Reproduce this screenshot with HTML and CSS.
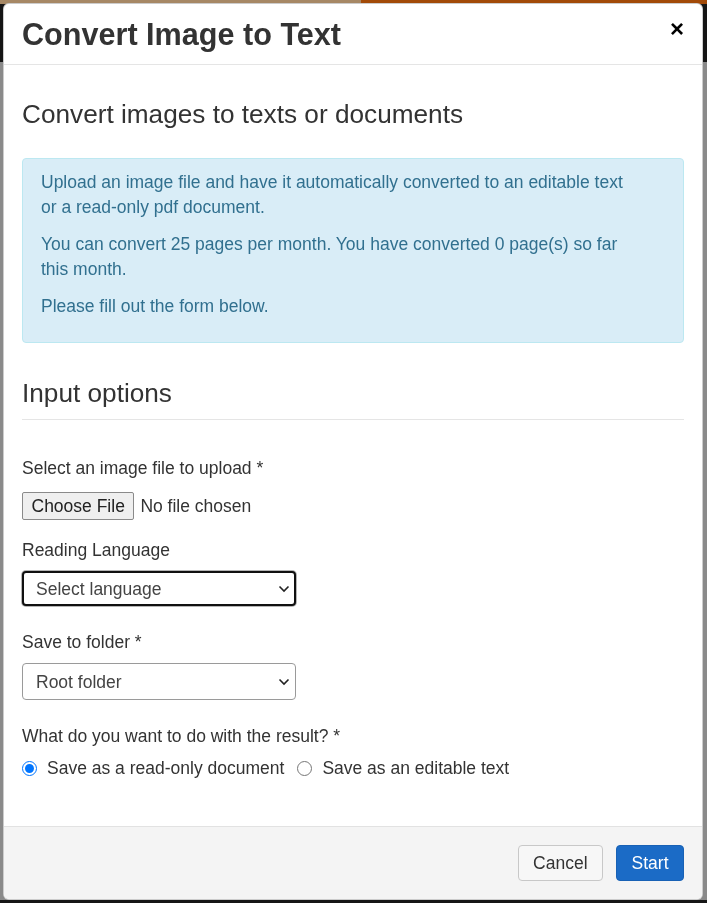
FILE: index.html
```html
<!DOCTYPE html>
<html>
    <head>
        <title>Convert Image to Text</title>
        <meta charset="UTF-8">
        <meta name="viewport" content="width=device-width, initial-scale=1.0">
        <link rel="stylesheet" href="styles.css">
    </head>
    <body>
        <!-- dimmed page behind the dialog -->
        <div class="page">
            <div class="page-top">
                <span class="top-left"></span>
                <span class="top-right"></span>
            </div>
            <div class="page-nav"></div>
            <div class="page-rest"></div>
            <div class="page-bottom"></div>
        </div>

        <div class="modal">
            <div class="modal-header">
                <h2 class="modal-title">Convert Image to Text</h2>
                <button type="button" class="close">&times;</button>
            </div>

            <div class="modal-body">
                <h3 class="lead-title">Convert images to texts or documents</h3>

                <div class="alert">
                    <p>Upload an image file and have it automatically converted to an editable text or a read-only pdf document.</p>
                    <p>You can convert 25 pages per month. You have converted 0 page(s) so far this month.</p>
                    <p>Please fill out the form below.</p>
                </div>

                <form class="ocr-form">
                    <div class="legend">Input options</div>

                    <div class="form-group file-group">
                        <label class="field-label label-file" for="imgFile">Select an image file to upload *</label>
                        <input type="file" id="imgFile" class="file-input">
                    </div>

                    <div class="form-group">
                        <label class="field-label" for="lang">Reading Language</label>
                        <div class="select-wrap">
                            <select id="lang" class="select select-focus">
                                <option>Select language</option>
                                <option>English</option>
                                <option>German</option>
                                <option>French</option>
                            </select>
                            <svg class="chevron" width="12" height="8" viewBox="0 0 12 8"><path d="M1.5 1.5 L6 6 L10.5 1.5" fill="none" stroke="#222" stroke-width="1.6"/></svg>
                        </div>
                    </div>

                    <div class="form-group">
                        <label class="field-label" for="folder">Save to folder *</label>
                        <div class="select-wrap">
                            <select id="folder" class="select">
                                <option>Root folder</option>
                            </select>
                            <svg class="chevron" width="12" height="8" viewBox="0 0 12 8"><path d="M1.5 1.5 L6 6 L10.5 1.5" fill="none" stroke="#222" stroke-width="1.6"/></svg>
                        </div>
                    </div>

                    <div class="form-group">
                        <div class="field-label label-result">What do you want to do with the result? *</div>
                        <div class="radio-row">
                            <input type="radio" name="result" id="resPdf" checked>
                            <label for="resPdf" class="radio-label">Save as a read-only document</label>
                            <input type="radio" name="result" id="resTxt" class="radio-second">
                            <label for="resTxt" class="radio-label">Save as an editable text</label>
                        </div>
                    </div>
                </form>
            </div>

            <div class="modal-footer">
                <button type="button" class="btn btn-default">Cancel</button>
                <button type="button" class="btn btn-primary">Start</button>
            </div>
        </div>
    </body>
</html>
```

FILE: styles.css
```css
body{
    margin: 0;
    font-family: "Liberation Sans", Arial, sans-serif;
    font-size: 17.5px;
    line-height: 25px;
    color: #333;
    background: #8a8a8a;
}

/* backdrop */
.page{
    height: 100vh;
    display: flex;
    flex-direction: column;
}
.page-top{
    height: 4px;
    display: flex;
}
.top-left{
    width: 361px;
    background: #a68865;
}
.top-right{
    flex: 1;
    background: #a24a08;
}
.page-nav{
    height: 58px;
    background: #151515;
}
.page-rest{
    flex: 1;
    background: #8a8a8a;
}
.page-bottom{
    height: 3px;
    background: #161616;
}

/* dialog */
.modal{
    position: fixed;
    top: 3px;
    left: 3px;
    width: 700px;
    height: 897px;
    box-sizing: border-box;
    display: flex;
    flex-direction: column;
    background: #fff;
    border: 1px solid rgba(0,0,0,.2);
    border-radius: 6px;
    overflow: hidden;
}
.modal-header{
    display: flex;
    align-items: center;
    justify-content: space-between;
    padding: 13px 18px;
    border-bottom: 1px solid #e5e5e5;
}
.modal-title{
    margin: 0;
    font-size: 30.6px;
    line-height: 34px;
    font-weight: bold;
    color: #333;
}
.close{
    border: 0;
    background: none;
    padding: 0;
    margin-top: -10px;
    font: bold 24px/1 "Liberation Sans", Arial, sans-serif;
    color: #000;
}
.modal-body{
    flex: 1;
    padding: 18px;
}
.lead-title{
    margin: 17px 0 29px;
    font-size: 26.2px;
    line-height: 29px;
    font-weight: normal;
}

.alert{
    padding: 11px 48px 11px 18px;
    margin-bottom: 35px;
    background: #d9edf7;
    border: 1px solid #bce8f1;
    border-radius: 4px;
    color: #31708f;
}
.alert p{
    margin: 0 0 12px;
}

.legend{
    font-size: 26.2px;
    line-height: 30px;
    padding-bottom: 11px;
    margin-bottom: 36px;
    border-bottom: 1px solid #e5e5e5;
}

.form-group{
    margin-bottom: 24px;
}
.file-group{
    margin-bottom: 18px;
}
.field-label{
    display: block;
    margin-bottom: 8px;
}
.label-file{
    margin-bottom: 11px;
}
.label-result{
    margin-bottom: 7px;
}

.file-input{
    display: block;
    height: 28px;
    font-family: inherit;
    font-size: 17.5px;
    color: #333;
}
.file-input::file-selector-button{
    height: 28px;
    padding: 0 8.5px;
    margin-right: 6px;
    font-family: inherit;
    font-size: 17.5px;
    color: #222;
    background: #efefef;
    border: 1px solid #8a8a8a;
    border-radius: 2px;
}

.select-wrap{
    position: relative;
    width: 274px;
}
.select{
    display: block;
    width: 274px;
    height: 37px;
    box-sizing: border-box;
    padding: 0 30px 0 13px;
    font-family: inherit;
    font-size: 17.5px;
    color: #444;
    background: #fff;
    border: 1px solid #9a9a9a;
    border-radius: 4px;
    appearance: none;
    -webkit-appearance: none;
}
.select-focus{
    height: 35px;
    padding-left: 12px;
    border: 2px solid #101010;
    box-shadow: 0 0 0 1px #b5b5b5;
}
.select-focus + .chevron{
    top: 14px;
}
.chevron{
    position: absolute;
    right: 6px;
    top: 15px;
    pointer-events: none;
}

.radio-row{
    display: flex;
    align-items: center;
}
.radio-row input{
    width: 15px;
    height: 15px;
    margin: 0;
}
.radio-label{
    margin-left: 10px;
}
.radio-second{
    margin-left: 13px !important;
}

.modal-footer{
    display: flex;
    justify-content: flex-end;
    gap: 13px;
    padding: 18px;
    background: #f4f4f4;
    border-top: 1px solid #e2e2e2;
}
.btn{
    height: 36px;
    padding: 0 14.5px;
    font-family: inherit;
    font-size: 17.5px;
    border: 1px solid;
    border-radius: 4px;
}
.btn-default{
    background: #f7f7f7;
    border-color: #c8c8c8;
    color: #333;
}
.btn-primary{
    background: #1b6bc6;
    border-color: #1861b5;
    color: #fff;
}
```
